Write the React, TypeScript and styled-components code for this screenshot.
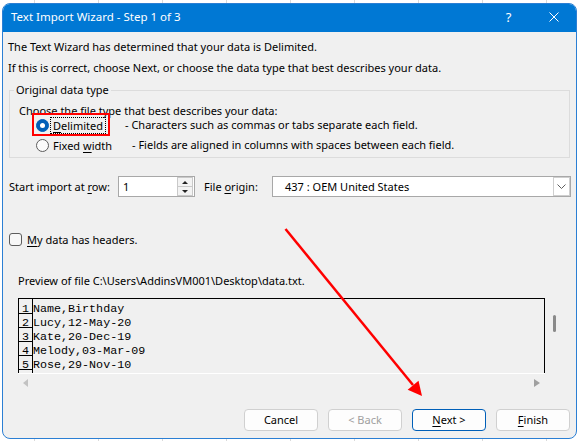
import React from "react";
import styled, { createGlobalStyle } from "styled-components";

const UI_FONT = `"Noto Sans", "Open Sans", "DejaVu Sans", sans-serif`;
const MONO_FONT = `"Liberation Mono", "Courier New", monospace`;

const GlobalStyle = createGlobalStyle`
  html, body { margin: 0; padding: 0; }
  body {
    width: 579px;
    height: 441px;
    overflow: hidden;
    background: #ffffff;
    font-family: ${UI_FONT};
    font-size: 11px;
    color: #000;
  }
  *, *::before, *::after { box-sizing: border-box; }
`;

/* Spreadsheet behind the dialog */
const Desktop = styled.div`
  position: relative;
  width: 579px;
  height: 441px;
  padding: 3px 2px 0 2px;
  background-color: #fff;
  background-image: repeating-linear-gradient(
    to right,
    transparent 0 34px,
    #dadada 34px 35px,
    transparent 35px 64px
  );
`;

const Dialog = styled.div`
  width: 575px;
  height: 436px;
  display: flex;
  flex-direction: column;
  background: #f0f0f0;
  border: 1px solid #2b7fd4;
  border-radius: 8px;
  overflow: hidden;
`;

const TitleBar = styled.div`
  flex: none;
  height: 28px;
  display: flex;
  align-items: center;
  background: #0078d4;
  color: #fff;
  padding-left: 8px;
`;

const TitleText = styled.div`
  flex: 1;
  font-size: 11.5px;
  line-height: 16px;
  padding-bottom: 2px;
`;

const CaptionButton = styled.div`
  width: 45px;
  height: 28px;
  display: flex;
  align-items: center;
  justify-content: center;
  padding-bottom: 2px;
  font-size: 13px;
`;

const Body = styled.div`
  flex: 1;
  display: flex;
  flex-direction: column;
  padding: 5px 6px 7px 5px;
`;

const Intro = styled.div`
  display: flex;
  flex-direction: column;
  gap: 1px;
`;

const Line = styled.p`
  margin: 0;
  line-height: 20px;
`;

const GroupBox = styled.fieldset`
  margin: 5px 0 0 1px;
  padding: 4px 0 4px 4px;
  border: 1px solid #dcdcdc;
  min-width: 0;
`;

const GroupTitle = styled.legend`
  padding: 0 2px;
  line-height: 14px;
  font-size: 11px;
`;

const GroupContent = styled.div`
  padding-left: 5px;
  display: flex;
  flex-direction: column;
`;

const Prompt = styled.div`
  height: 16px;
  padding-top: 2px;
  line-height: 15px;
`;

const OptionRow = styled.div<{ $descAt: number }>`
  position: relative;
  margin-left: 17px;
  height: 16px;
  display: grid;
  grid-template-columns: ${(p) => p.$descAt}px auto;
  align-items: center;

  & + & {
    margin-top: 4px;
  }
`;

const RadioLabel = styled.div`
  display: flex;
  align-items: center;
  gap: 2px;
`;

const Radio = styled.span<{ $checked?: boolean }>`
  width: 13px;
  height: 13px;
  border-radius: 50%;
  flex: none;
  display: flex;
  align-items: center;
  justify-content: center;
  background: ${(p) => (p.$checked ? "#005fb8" : "#fbfbfb")};
  border: 1px solid ${(p) => (p.$checked ? "#005fb8" : "#5c5c5c")};

  &::after {
    content: "";
    display: ${(p) => (p.$checked ? "block" : "none")};
    width: 5px;
    height: 5px;
    border-radius: 50%;
    background: #fff;
  }
`;

const LabelText = styled.span<{ $focused?: boolean }>`
  padding: 0 2px;
  line-height: 15px;
  outline: ${(p) => (p.$focused ? "1px dotted #000" : "none")};
`;

const Key = styled.span`
  text-decoration: underline;
  text-underline-offset: 2px;
`;

const Description = styled.span`
  line-height: 16px;
  white-space: nowrap;
`;

/* Red annotation frame around the chosen option */
const Highlight = styled.div`
  position: absolute;
  left: -4px;
  top: -4px;
  width: 78px;
  height: 23px;
  border: 2px solid #ff0000;
  pointer-events: none;
`;

const ImportRow = styled.div`
  margin: 18px 0 0 1px;
  height: 21px;
  display: flex;
  align-items: center;
`;

const FieldLabel = styled.span<{ $width: number; $gap?: number }>`
  flex: none;
  width: ${(p) => p.$width}px;
  margin-left: ${(p) => p.$gap ?? 0}px;
  line-height: 16px;
  white-space: nowrap;
`;

const SpinBox = styled.div`
  flex: none;
  width: 77px;
  height: 21px;
  display: flex;
  align-items: center;
  background: #fff;
  border: 1px solid #a8a8a8;
`;

const SpinValue = styled.span`
  flex: 1;
  padding-left: 4px;
  line-height: 19px;
`;

const Spinner = styled.div`
  width: 16px;
  height: 19px;
  margin-right: 1px;
  display: flex;
  flex-direction: column;
  border: 1px solid #c9c9c9;
  background: #f3f3f3;
`;

const SpinStep = styled.div<{ $down?: boolean }>`
  flex: 1;
  display: flex;
  align-items: center;
  justify-content: center;
  border-top: ${(p) => (p.$down ? "1px solid #c9c9c9" : "none")};

  &::after {
    content: "";
    width: 0;
    height: 0;
    border-left: 3px solid transparent;
    border-right: 3px solid transparent;
    ${(p) =>
      p.$down ? "border-top: 3px solid #222;" : "border-bottom: 3px solid #222;"}
  }
`;

const ComboBox = styled.div`
  flex: none;
  width: 299px;
  height: 21px;
  display: flex;
  align-items: center;
  background: #fff;
  border: 1px solid #a8a8a8;
`;

const ComboValue = styled.span`
  flex: 1;
  padding-left: 12px;
  line-height: 19px;
`;

const DropButton = styled.div`
  width: 17px;
  height: 19px;
  display: flex;
  align-items: center;
  justify-content: center;
  border: 1px solid #cfcfcf;
  background: #fff;
`;

const CheckRow = styled.div`
  margin: 34px 0 0 1px;
  height: 16px;
  display: flex;
  align-items: center;
  gap: 5px;
`;

const CheckBox = styled.span`
  width: 13px;
  height: 13px;
  flex: none;
  border: 1px solid #5c5c5c;
  border-radius: 3px;
  background: #f7f7f7;
`;

const PreviewCaption = styled.div`
  margin: 26px 0 0 10px;
  line-height: 16px;
`;

const PreviewFrame = styled.div`
  margin: 9px 0 0 10px;
  height: 75px;
  display: flex;
`;

const DataPane = styled.div`
  width: 527px;
  height: 75px;
  display: flex;
  overflow: hidden;
  border: 1px solid #000;
  border-bottom: none;
  font-family: ${MONO_FONT};
  font-size: 11.7px;
`;

const NumberColumn = styled.div`
  width: 14px;
  flex: none;
  padding-top: 1px;
  border-right: 1px solid #000;
`;

const NumberCell = styled.div`
  height: 14px;
  padding-top: 4px;
  line-height: 11px;
  text-align: center;
  border-bottom: 1px solid #000;
`;

const TextColumn = styled.div`
  flex: 1;
  padding-top: 1px;
`;

const TextRow = styled.div`
  height: 14px;
  padding-top: 4px;
  line-height: 11px;
  white-space: pre;
`;

const VScroll = styled.div`
  width: 17px;
  flex: none;
`;

const VThumb = styled.div`
  width: 3px;
  height: 17px;
  margin: 17px 0 0 8px;
  border-radius: 2px;
  background: #8a8a8a;
`;

const HScroll = styled.div`
  margin-left: 10px;
  width: 527px;
  height: 19px;
  border-top: 1px solid #fff;
  display: flex;
  align-items: center;
  justify-content: space-between;
  padding: 0 5px;
`;

const ScrollArrow = styled.span<{ $dir: "left" | "right"; $dim?: boolean }>`
  width: 0;
  height: 0;
  border-top: 4px solid transparent;
  border-bottom: 4px solid transparent;
  ${(p) =>
    p.$dir === "left"
      ? `border-right: 5px solid ${p.$dim ? "#c2c2c2" : "#a0a0a0"};`
      : `border-left: 6px solid ${p.$dim ? "#c2c2c2" : "#a0a0a0"};`}
`;

const ButtonBar = styled.div`
  margin-top: auto;
  display: flex;
  justify-content: flex-end;
  gap: 10px;
`;

const Button = styled.div<{ $default?: boolean; $disabled?: boolean }>`
  width: 74px;
  height: 22px;
  display: flex;
  align-items: center;
  justify-content: center;
  border-radius: 4px;
  background: #fdfdfd;
  border: 1px solid ${(p) => (p.$default ? "#005fb8" : "#d0d0d0")};
  color: ${(p) => (p.$disabled ? "#a0a0a0" : "#000")};
  line-height: 16px;
`;

const ArrowOverlay = styled.svg`
  position: absolute;
  left: 0;
  top: 0;
  pointer-events: none;
`;

const previewRows = [
  "Name,Birthday",
  "Lucy,12-May-20",
  "Kate,20-Dec-19",
  "Melody,03-Mar-09",
  "Rose,29-Nov-10",
];

export default function App() {
  return (
    <>
      <GlobalStyle />
      <Desktop>
        <Dialog>
          <TitleBar>
            <TitleText>Text Import Wizard - Step 1 of 3</TitleText>
            <CaptionButton>?</CaptionButton>
            <CaptionButton>
              <svg width="10" height="10" viewBox="0 0 10 10">
                <path d="M0.5 0.5 L9.5 9.5 M9.5 0.5 L0.5 9.5" stroke="#fff" strokeWidth="1" />
              </svg>
            </CaptionButton>
          </TitleBar>

          <Body>
            <Intro>
              <Line>The Text Wizard has determined that your data is Delimited.</Line>
              <Line>If this is correct, choose Next, or choose the data type that best describes your data.</Line>
            </Intro>

            <GroupBox>
              <GroupTitle>Original data type</GroupTitle>
              <GroupContent>
                <Prompt>Choose the file type that best describes your data:</Prompt>
                <OptionRow $descAt={89}>
                  <RadioLabel>
                    <Radio $checked />
                    <LabelText $focused>
                      <Key>D</Key>elimited
                    </LabelText>
                  </RadioLabel>
                  <Description>- Characters such as commas or tabs separate each field.</Description>
                  <Highlight />
                </OptionRow>
                <OptionRow $descAt={96}>
                  <RadioLabel>
                    <Radio />
                    <LabelText>
                      Fixed <Key>w</Key>idth
                    </LabelText>
                  </RadioLabel>
                  <Description>- Fields are aligned in columns with spaces between each field.</Description>
                </OptionRow>
              </GroupContent>
            </GroupBox>

            <ImportRow>
              <FieldLabel $width={109}>
                Start import at <Key>r</Key>ow:
              </FieldLabel>
              <SpinBox>
                <SpinValue>1</SpinValue>
                <Spinner>
                  <SpinStep />
                  <SpinStep $down />
                </Spinner>
              </SpinBox>
              <FieldLabel $width={68} $gap={9}>
                File <Key>o</Key>rigin:
              </FieldLabel>
              <ComboBox>
                <ComboValue>437 : OEM United States</ComboValue>
                <DropButton>
                  <svg width="9" height="5" viewBox="0 0 9 5">
                    <path d="M0.5 0.5 L4.5 4.5 L8.5 0.5" fill="none" stroke="#5f5f5f" strokeWidth="1" />
                  </svg>
                </DropButton>
              </ComboBox>
            </ImportRow>

            <CheckRow>
              <CheckBox />
              <span>
                <Key>M</Key>y data has headers.
              </span>
            </CheckRow>

            <PreviewCaption>Preview of file C:\Users\AddinsVM001\Desktop\data.txt.</PreviewCaption>
            <PreviewFrame>
              <DataPane>
                <NumberColumn>
                  {previewRows.map((_, i) => (
                    <NumberCell key={i}>{i + 1}</NumberCell>
                  ))}
                  <NumberCell />
                </NumberColumn>
                <TextColumn>
                  {previewRows.map((row, i) => (
                    <TextRow key={i}>{row}</TextRow>
                  ))}
                </TextColumn>
              </DataPane>
              <VScroll>
                <VThumb />
              </VScroll>
            </PreviewFrame>
            <HScroll>
              <ScrollArrow $dir="left" $dim />
              <ScrollArrow $dir="right" />
            </HScroll>

            <ButtonBar>
              <Button>Cancel</Button>
              <Button $disabled>&lt; Back</Button>
              <Button $default>
                <span>
                  <Key>N</Key>ext &gt;
                </span>
              </Button>
              <Button>
                <span>
                  <Key>F</Key>inish
                </span>
              </Button>
            </ButtonBar>
          </Body>
        </Dialog>

        <ArrowOverlay width="579" height="441" viewBox="0 0 579 441">
          <line x1="285.5" y1="229" x2="413" y2="385" stroke="#ff0000" strokeWidth="2.5" />
          <polygon points="422,396 418.5,380.7 407.7,389.7" fill="#ff0000" />
        </ArrowOverlay>
      </Desktop>
    </>
  );
}
